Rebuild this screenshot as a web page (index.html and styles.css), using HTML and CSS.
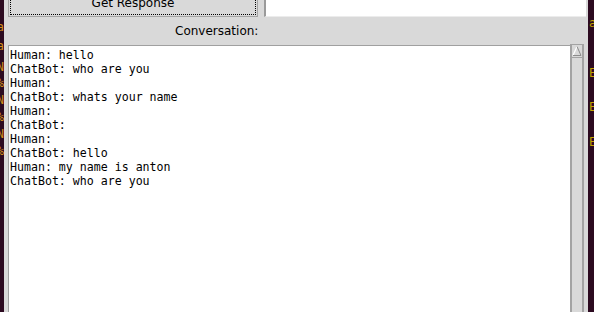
FILE: index.html
```html
<!DOCTYPE html>
<html lang="en">
  <head>
    <meta charset="UTF-8" />
    <meta name="viewport" content="width=device-width, initial-scale=1.0" />
    <title>ChatBot</title>
    <link rel="stylesheet" href="styles.css">
  </head>
  <body>
    <!-- terminal behind the window, left edge -->
    <div class="term term-left">
      <span class="tl" style="top: 20px">a</span>
      <span class="tl" style="top: 39px">a</span>
      <span class="tl" style="top: 60px">N</span>
      <span class="tl" style="top: 76px">%</span>
      <span class="tl" style="top: 93px">N</span>
      <span class="tl" style="top: 110px">%</span>
      <span class="tl" style="top: 127px">N</span>
      <span class="tl" style="top: 144px">%</span>
    </div>

    <div class="window">
      <div class="top-row">
        <button class="btn" id="getBtn"><span class="focus">Get Response</span></button>
        <div class="entry"></div>
      </div>

      <div class="label">Conversation:</div>

      <div class="convo">
        <div class="text" id="conversation">Human: hello
ChatBot: who are you
Human:
ChatBot: whats your name
Human:
ChatBot:
Human:
ChatBot: hello
Human: my name is anton
ChatBot: who are you</div>
        <div class="scrollbar">
          <div class="arrow">
            <svg width="10" height="12" viewBox="0 0 10 12">
              <polygon points="5,1.5 9,10.5 1,10.5" fill="#d9d9d9" />
              <polyline points="1,10.5 5,1.5" fill="none" stroke="#ffffff" stroke-width="1.2" />
              <polyline points="5,1.5 9,10.5 1,10.5" fill="none" stroke="#8c8c8c" stroke-width="1" />
            </svg>
          </div>
        </div>
      </div>
    </div>

    <!-- terminal behind the window, right edge -->
    <div class="term term-right">
      <span class="tr" style="top: 16px">a</span>
      <span class="tr" style="top: 66px">E</span>
      <span class="tr" style="top: 100px">E</span>
      <span class="tr" style="top: 135px">E</span>
    </div>
  </body>
</html>
```

FILE: styles.css
```css
body {
  margin: 0;
  padding: 0;
  overflow: hidden;
  background: #2c0a20;
  height: 312px;
  display: flex;
  font-family: "DejaVu Sans", sans-serif;
}

.term {
  position: relative;
  overflow: hidden;
  height: 312px;
  font-family: "DejaVu Sans Mono", monospace;
  font-size: 12px;
  color: #c4a000;
}

.term-left {
  width: 4px;
}

.term-right {
  width: 6px;
}

.tl {
  position: absolute;
  right: 0;
  color: #d08a1a;
}

.tr {
  position: absolute;
  left: 1px;
  color: #c4a000;
}

.window {
  width: 584px;
  height: 312px;
  background: #d9d9d9;
  overflow: hidden;
  flex-shrink: 0;
}

.top-row {
  display: flex;
  gap: 6px;
  margin: -12px 2px 0 4px;
  height: 29px;
}

.btn {
  width: 250px;
  height: 29px;
  padding: 1px;
  margin: 0;
  background: #d9d9d9;
  border: 1px solid #a3a3a3;
  font-family: "DejaVu Sans", sans-serif;
  font-size: 12px;
  color: #000;
  display: flex;
}

.focus {
  flex: 1;
  border: 1px dotted #000;
  display: flex;
  align-items: center;
  justify-content: center;
}

.entry {
  flex: 1;
  background: #fff;
  border-left: 2px solid #9a9a9a;
  border-bottom: 1px solid #ececec;
  height: 28px;
}

.label {
  height: 28px;
  line-height: 28px;
  padding-left: 171px;
  font-size: 12px;
  color: #000;
}

.convo {
  display: flex;
  margin-left: 4px;
  height: 280px;
}

.text {
  width: 560px;
  background: #fff;
  border-left: 1px solid #a0a0a0;
  border-top: 1px solid #a0a0a0;
  padding: 2px 0 0 1px;
  font-family: "DejaVu Sans Mono", monospace;
  font-size: 11.6px;
  line-height: 14px;
  white-space: pre;
  color: #000;
}

.scrollbar {
  width: 10px;
  background: #d9d9d9;
  border-left: 2px solid #a3a3a3;
  border-right: 2px solid #a3a3a3;
  border-top: 1px solid #a3a3a3;
  margin-top: -1px;
}

.arrow {
  height: 12px;
  border-bottom: 1px solid #a3a3a3;
  display: flex;
  justify-content: center;
}
```
